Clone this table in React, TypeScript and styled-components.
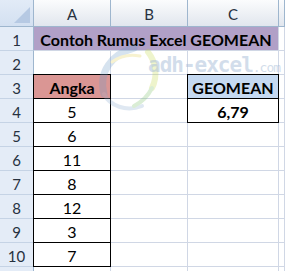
import styled, { createGlobalStyle, css } from 'styled-components';

const GlobalStyle = createGlobalStyle`
    html, body {
        margin: 0;
        padding: 0;
        background: #ffffff;
    }
`;

const grid = '#d0d7e5';
const headLine = '#9eb6ce';

const Sheet = styled.div`
    position: relative;
    width: 285px;
    height: 271px;
    overflow: hidden;
    display: grid;
    grid-template-columns: 34px 77px 77px 91px 1fr;
    grid-template-rows: 27px repeat(11, 24px);
    font-family: Lato, 'Open Sans', sans-serif;
    font-size: 16px;
    color: #000;
`;

const Corner = styled.div`
    position: relative;
    box-sizing: border-box;
    border-right: 1px solid ${headLine};
    border-bottom: 1px solid ${headLine};
    background: linear-gradient(#e2ebf7, #d3e0f1);

    &::after {
        content: '';
        position: absolute;
        right: 3px;
        bottom: 3px;
        width: 0;
        height: 0;
        border-left: 16px solid transparent;
        border-bottom: 16px solid #b6c9e3;
    }
`;

const ColHead = styled.div`
    box-sizing: border-box;
    display: flex;
    align-items: center;
    justify-content: center;
    padding-top: 2px;
    border-right: 1px solid ${headLine};
    border-bottom: 1px solid ${headLine};
    background: linear-gradient(#fbfcfd 0%, #eef1f5 50%, #e1e6ee 100%);
    color: #27313f;
    font-size: 15px;
`;

const RowHead = styled.div`
    box-sizing: border-box;
    display: flex;
    align-items: center;
    justify-content: center;
    padding-top: 2px;
    border-right: 1px solid ${headLine};
    border-bottom: 1px solid #c5d3e5;
    background: #e4ecf7;
    color: #27313f;
    font-size: 15px;
`;

type CellProps = {
    $fill?: string;
    $boxed?: boolean;
    $bold?: boolean;
    $span?: number;
};

const Cell = styled.div<CellProps>`
    box-sizing: border-box;
    display: flex;
    align-items: center;
    justify-content: center;
    padding-top: 2px;
    border-right: 1px solid ${grid};
    border-bottom: 1px solid ${grid};
    background: ${(p) => p.$fill || '#ffffff'};
    font-weight: ${(p) => (p.$bold ? 700 : 400)};
    grid-column: span ${(p) => p.$span || 1};
    ${(p) =>
        p.$boxed &&
        css`
            border-right-color: #000;
            border-bottom-color: #000;
            box-shadow: -1px 0 0 #000, 0 -1px 0 #000, -1px -1px 0 #000;
        `}
`;

const Watermark = styled.svg`
    position: absolute;
    left: 0;
    top: 0;
    pointer-events: none;
`;

const values = ['5', '6', '11', '8', '12', '3', '7'];

const App = () => {
    const rows: JSX.Element[] = [];

    for (let r = 1; r <= 11; r++) {
        // row 11 only peeks in at the bottom edge, its number is hidden
        rows.push(<RowHead key={`h${r}`}>{r < 11 ? r : ''}</RowHead>);
        if (r === 1) {
            rows.push(
                <Cell key="t" $span={3} $fill="#b1a0c7" $bold>
                    Contoh Rumus Excel GEOMEAN
                </Cell>
            );
        } else if (r === 3) {
            rows.push(
                <Cell key="a3" $fill="#da9694" $boxed $bold>
                    Angka
                </Cell>,
                <Cell key="b3" />,
                <Cell key="c3" $fill="#c5d9f1" $boxed $bold>
                    GEOMEAN
                </Cell>
            );
        } else if (r === 4) {
            rows.push(
                <Cell key="a4" $boxed>
                    {values[0]}
                </Cell>,
                <Cell key="b4" />,
                <Cell key="c4" $boxed $bold>
                    6,79
                </Cell>
            );
        } else if (r >= 5 && r <= 10) {
            rows.push(
                <Cell key={`a${r}`} $boxed>
                    {values[r - 4]}
                </Cell>,
                <Cell key={`b${r}`} />,
                <Cell key={`c${r}`} />
            );
        } else {
            rows.push(<Cell key={`a${r}`} />, <Cell key={`b${r}`} />, <Cell key={`c${r}`} />);
        }
        rows.push(<Cell key={`d${r}`} />);
    }

    return (
        <>
            <GlobalStyle />
            <Sheet>
                <Corner />
                <ColHead>A</ColHead>
                <ColHead>B</ColHead>
                <ColHead>C</ColHead>
                <ColHead />
                {rows}
                <Watermark width="285" height="271" viewBox="0 0 285 271">
                    <g opacity="0.28" fill="none" strokeLinecap="round">
                        <path d="M134 48 C112 54 98 72 104 94" stroke="#6f9cc9" strokeWidth="7" />
                        <path d="M104 94 C110 106 126 112 142 106" stroke="#8fb0d4" strokeWidth="4" />
                        <path d="M148 52 C156 62 158 76 152 88" stroke="#c6d84a" strokeWidth="6" />
                        <path d="M152 88 C148 96 142 102 134 106" stroke="#7cc26a" strokeWidth="4" />
                        <path d="M112 62 C120 56 130 54 140 56" stroke="#e6d25a" strokeWidth="3" />
                    </g>
                    <text
                        x="148"
                        y="72"
                        fill="#a7bdd8"
                        opacity="0.5"
                        fontFamily="'DejaVu Sans Mono', monospace"
                        fontSize="21"
                        fontWeight="700"
                        letterSpacing="-1"
                    >
                        adh-excel
                        <tspan fontSize="13" fontWeight="400">.com</tspan>
                    </text>
                </Watermark>
            </Sheet>
        </>
    );
};

export default App;
